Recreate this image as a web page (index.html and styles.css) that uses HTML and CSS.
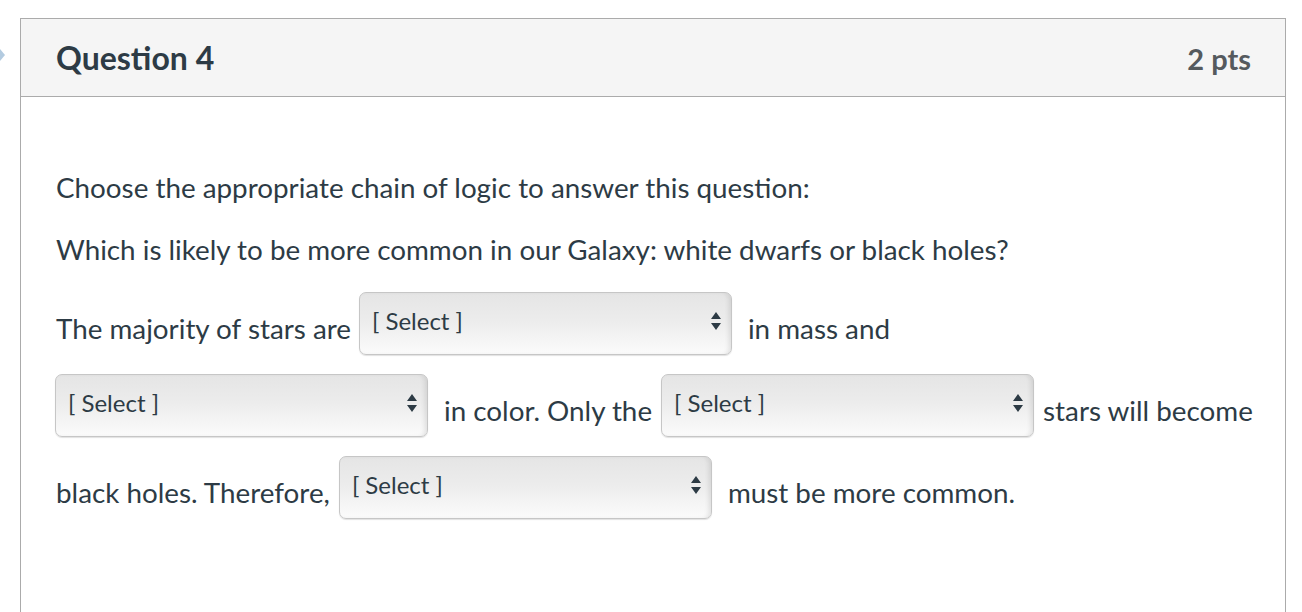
FILE: index.html
```html
<!DOCTYPE html>
<html>
<head>
<meta charset="utf-8">
<link rel="stylesheet" href="styles.css">
</head>
<body>
<div class="page">
  <div class="gutter">
    <svg class="marker" width="8" height="14" viewBox="0 0 8 14"><path d="M-4 1 L0 1 L5 7 L0 13 L-4 13 Z" fill="#b3cbe0"/></svg>
  </div>
  <div class="card">
    <div class="card-header">
      <span class="title">Question 4</span>
      <span class="pts">2 pts</span>
    </div>
    <div class="card-body">
      <p class="para">Choose the appropriate chain of logic to answer this question:</p>
      <p class="para">Which is likely to be more common in our Galaxy: white dwarfs or black holes?</p>
      <div class="row">
        <span class="txt">The majority of stars are</span>
        <div class="select gap-l8"><span class="sel-text">[ Select ]</span><svg class="arrows" width="10" height="19" viewBox="0 0 10 19"><path d="M5 0 L10 7 L0 7 Z M0 11 L10 11 L5 18 Z" fill="#2d3b45"/></svg></div>
        <span class="txt after16">in mass and</span>
      </div>
      <div class="row">
        <div class="select first"><span class="sel-text">[ Select ]</span><svg class="arrows" width="10" height="19" viewBox="0 0 10 19"><path d="M5 0 L10 7 L0 7 Z M0 11 L10 11 L5 18 Z" fill="#2d3b45"/></svg></div>
        <span class="txt after16">in color. Only the</span>
        <div class="select gap-l9"><span class="sel-text">[ Select ]</span><svg class="arrows" width="10" height="19" viewBox="0 0 10 19"><path d="M5 0 L10 7 L0 7 Z M0 11 L10 11 L5 18 Z" fill="#2d3b45"/></svg></div>
        <span class="txt after9">stars will become</span>
      </div>
      <div class="row">
        <span class="txt">black holes. Therefore,</span>
        <div class="select gap-l9"><span class="sel-text">[ Select ]</span><svg class="arrows" width="10" height="19" viewBox="0 0 10 19"><path d="M5 0 L10 7 L0 7 Z M0 11 L10 11 L5 18 Z" fill="#2d3b45"/></svg></div>
        <span class="txt after16">must be more common.</span>
      </div>
    </div>
  </div>
</div>
</body>
</html>
```
FILE: styles.css
```css
html, body {
  margin: 0;
  padding: 0;
  background: #ffffff;
}
body {
  font-family: Lato, "Noto Sans", sans-serif;
  color: #2d3b45;
  overflow: hidden;
}
.page {
  display: flex;
  align-items: flex-start;
  padding-top: 18px;
  height: 594px;
}
.gutter {
  width: 20px;
  flex: 0 0 20px;
  padding-top: 30px;
}
.marker {
  display: block;
}
.card {
  width: 1266px;
  box-sizing: border-box;
  border: 1px solid #ababab;
  border-bottom: none;
  height: 600px;
}
.card-header {
  display: flex;
  justify-content: space-between;
  align-items: center;
  background: #f5f5f5;
  border-bottom: 1px solid #ababab;
  height: 77px;
  padding: 0 34px 0 35px;
}
.title {
  font-weight: 700;
  font-size: 32px;
  color: #2d3b45;
}
.pts {
  font-weight: 700;
  font-size: 29px;
  color: #555a5e;
  padding-top: 2px;
}
.card-body {
  padding: 73px 30px 0 35px;
}
.para {
  margin: 0 0 26px;
  font-size: 27.8px;
  line-height: 36px;
  white-space: nowrap;
}
.para + .para {
  margin-bottom: 24px;
}
.row {
  display: flex;
  align-items: center;
  height: 63px;
  margin-bottom: 19px;
  white-space: nowrap;
}
.txt {
  font-size: 27.8px;
  line-height: 36px;
  padding-top: 10px;
}
.select {
  position: relative;
  box-sizing: border-box;
  width: 373px;
  height: 63px;
  border: 1px solid #c6c6c6;
  border-radius: 7px;
  background: linear-gradient(#e5e5e5 0%, #ececec 45%, #fbfbfb 100%);
  box-shadow: inset -4px 0 5px -2px rgba(0, 0, 0, 0.10), 0 1px 1px rgba(0, 0, 0, 0.12);
  display: flex;
  align-items: flex-start;
  justify-content: space-between;
  padding: 14px 10px 0 12px;
  flex: 0 0 auto;
}
.select.first {
  margin-left: -1px;
}
.gap-l8 { margin-left: 8px; }
.gap-l9 { margin-left: 9px; }
.after16 { margin-left: 16px; }
.after9 { margin-left: 9px; }
.sel-text {
  font-size: 24px;
  line-height: 28px;
  color: #2d3b45;
}
.arrows {
  margin-top: 5px;
  display: block;
}
```
